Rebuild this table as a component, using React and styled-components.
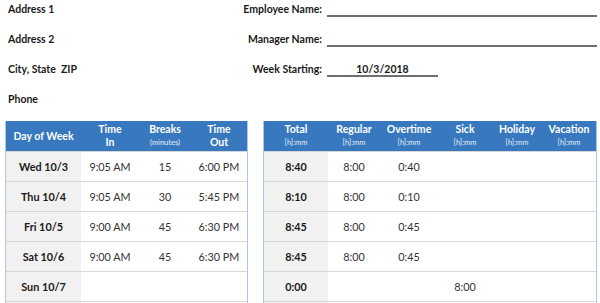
import React from "react";
import styled, { createGlobalStyle } from "styled-components";

const Global = createGlobalStyle`
  html, body { margin: 0; padding: 0; background: #fff; }
  body { font-family: Lato, "Open Sans", sans-serif; color: #1a1a1a; overflow: hidden; }
`;

const Page = styled.div`
  width: 600px;
  height: 303px;
  overflow: hidden;
`;

const Top = styled.div`
  display: flex;
  height: 121px;
`;

const LeftCol = styled.div`
  width: 233px;
  padding-left: 8px;
  box-sizing: border-box;
  display: flex;
  flex-direction: column;
  gap: 12px;
`;

const RightCol = styled.div`
  display: flex;
  flex-direction: column;
  gap: 12px;
`;

const InfoLabel = styled.div`
  height: 18px;
  line-height: 18px;
  font-size: 10.5px;
  font-weight: 700;
  white-space: nowrap;
`;

const Field = styled.div`
  display: grid;
  grid-template-columns: 89px auto;
  column-gap: 5px;
  height: 18px;
`;

const FieldLabel = styled(InfoLabel)`
  text-align: right;
`;

const Blank = styled.div`
  width: ${(p) => p.$w}px;
  height: 15px;
  border-bottom: 2px solid #6f6f6f;
  font-size: 10.5px;
  font-weight: 700;
  line-height: 18px;
  text-align: center;
  box-sizing: content-box;
`;

const Tables = styled.div`
  display: flex;
  gap: 15px;
  padding-left: 5px;
`;

const Table = styled.div`
  display: grid;
  grid-template-columns: ${(p) => p.$cols};
  border-left: 1px solid #a8c9ec;
  border-right: 1px solid #a8c9ec;
`;

const Head = styled.div`
  height: 30px;
  background: #3878bf;
  color: #fff;
  display: flex;
  flex-direction: column;
  align-items: center;
  justify-content: center;
  font-size: 10.5px;
  font-weight: 700;
  line-height: 13px;
  white-space: nowrap;
`;

const Sub = styled.span`
  font-size: 7.5px;
  font-weight: 400;
  line-height: 13px;
  color: #e6eef8;
`;

const Cell = styled.div`
  height: 29px;
  border-top: 1px solid #d7d7d7;
  background: ${(p) => (p.$key ? "#f1f1f1" : "#fff")};
  display: flex;
  align-items: center;
  justify-content: center;
  font-size: 10.8px;
  font-weight: ${(p) => (p.$key ? 700 : 400)};
  color: ${(p) => (p.$key ? "#1a1a1a" : "#333")};
  white-space: nowrap;
`;

const leftHead = [
  ["Day of Week"],
  ["Time", "In"],
  ["Breaks", "(minutes)", true],
  ["Time", "Out"],
];

const rightHead = ["Total", "Regular", "Overtime", "Sick", "Holiday", "Vacation"];

const days = [
  ["Wed 10/3", "9:05 AM", "15", "6:00 PM"],
  ["Thu 10/4", "9:05 AM", "30", "5:45 PM"],
  ["Fri 10/5", "9:00 AM", "45", "6:30 PM"],
  ["Sat 10/6", "9:00 AM", "45", "6:30 PM"],
  ["Sun 10/7", "", "", ""],
  ["", "", "", ""],
];

const totals = [
  ["8:40", "8:00", "0:40", "", "", ""],
  ["8:10", "8:00", "0:10", "", "", ""],
  ["8:45", "8:00", "0:45", "", "", ""],
  ["8:45", "8:00", "0:45", "", "", ""],
  ["0:00", "", "", "8:00", "", ""],
  ["", "", "", "", "", ""],
];

export default function App() {
  return (
    <Page>
      <Global />
      <Top>
        <LeftCol>
          <InfoLabel>Address 1</InfoLabel>
          <InfoLabel>Address 2</InfoLabel>
          <InfoLabel>City, State&nbsp; ZIP</InfoLabel>
          <InfoLabel>Phone</InfoLabel>
        </LeftCol>
        <RightCol>
          <Field>
            <FieldLabel>Employee Name:</FieldLabel>
            <Blank $w={270} />
          </Field>
          <Field>
            <FieldLabel>Manager Name:</FieldLabel>
            <Blank $w={270} />
          </Field>
          <Field>
            <FieldLabel>Week Starting:</FieldLabel>
            <Blank $w={111}>10/3/2018</Blank>
          </Field>
        </RightCol>
      </Top>
      <Tables>
        <Table $cols="75px 58px 52px 56px">
          {leftHead.map(([a, b, small], i) => (
            <Head key={i}>
              <span>{a}</span>
              {b && (small ? <Sub>{b}</Sub> : <span>{b}</span>)}
            </Head>
          ))}
          {days.map((row, r) =>
            row.map((v, c) => (
              <Cell key={r + "-" + c} $key={c === 0}>
                {v}
              </Cell>
            ))
          )}
        </Table>
        <Table $cols="64px 52px 58px 54px 50px 54px">
          {rightHead.map((h) => (
            <Head key={h}>
              <span>{h}</span>
              <Sub>[h]:mm</Sub>
            </Head>
          ))}
          {totals.map((row, r) =>
            row.map((v, c) => (
              <Cell key={r + "-" + c} $key={c === 0}>
                {v}
              </Cell>
            ))
          )}
        </Table>
      </Tables>
    </Page>
  );
}
